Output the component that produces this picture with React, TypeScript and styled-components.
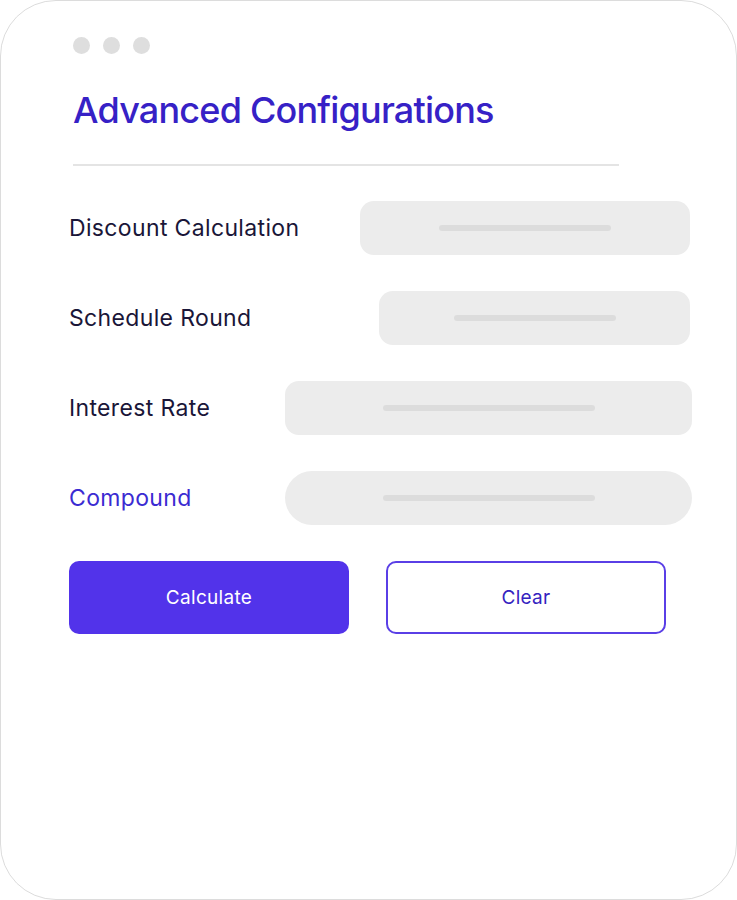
import React from "react";
import styled, { createGlobalStyle } from "styled-components";

const GlobalStyle = createGlobalStyle`
  * { box-sizing: border-box; }
  body {
    margin: 0;
    background: #ffffff;
    font-family: Inter, "Noto Sans", sans-serif;
  }
`;

type Field = {
  label: string;
  accent?: boolean;
  width: number;
  lineWidth: number;
  rounded?: boolean;
  offset: number;
};

const fields: Field[] = [
  { label: "Discount Calculation", width: 330, lineWidth: 172, offset: 46 },
  { label: "Schedule Round", width: 311, lineWidth: 162, offset: 46 },
  { label: "Interest Rate", width: 407, lineWidth: 212, offset: 44 },
  { label: "Compound", accent: true, width: 407, lineWidth: 212, rounded: true, offset: 44 },
];

export default function App() {
  return (
    <>
      <GlobalStyle />
      <Card>
        <Dots>
          <Dot />
          <Dot />
          <Dot />
        </Dots>
        <Title>Advanced Configurations</Title>
        <Divider />
        <Form>
          {fields.map((f) => (
            <Row key={f.label} $offset={f.offset}>
              <Label $accent={f.accent}>{f.label}</Label>
              <Input $width={f.width} $rounded={f.rounded}>
                <Placeholder $width={f.lineWidth} />
              </Input>
            </Row>
          ))}
        </Form>
        <Actions>
          <PrimaryButton>Calculate</PrimaryButton>
          <OutlineButton>Clear</OutlineButton>
        </Actions>
      </Card>
    </>
  );
}

const Card = styled.div`
  width: 737px;
  height: 900px;
  border: 1px solid #dcdcdc;
  border-radius: 56px;
  background: #fff;
  padding: 36px 0 0 68px;
`;

const Dots = styled.div`
  display: flex;
  gap: 13px;
  margin-left: 4px;
`;

const Dot = styled.span`
  width: 17px;
  height: 17px;
  border-radius: 50%;
  background: #dedede;
`;

const Title = styled.h1`
  margin: 33px 0 0 4px;
  font-size: 36px;
  line-height: 46px;
  font-weight: 500;
  letter-spacing: -0.8px;
  color: #3621c6;
`;

const Divider = styled.div`
  width: 546px;
  height: 2px;
  margin: 31px 0 0 4px;
  background: #e4e4e4;
`;

const Form = styled.div`
  display: flex;
  flex-direction: column;
  gap: 36px;
  margin-top: 35px;
`;

const Row = styled.div<{ $offset: number }>`
  display: flex;
  align-items: center;
  justify-content: space-between;
  height: 54px;
  padding-right: ${(p) => p.$offset}px;
`;

const Label = styled.span<{ $accent?: boolean }>`
  font-size: 23px;
  color: ${(p) => (p.$accent ? "#3b2bd2" : "#1a1638")};
  letter-spacing: 0.35px;
`;

const Input = styled.div<{ $width: number; $rounded?: boolean }>`
  width: ${(p) => p.$width}px;
  height: 54px;
  border-radius: ${(p) => (p.$rounded ? "27px" : "14px")};
  background: #ececec;
  display: flex;
  align-items: center;
  justify-content: center;
`;

const Placeholder = styled.span<{ $width: number }>`
  width: ${(p) => p.$width}px;
  height: 6px;
  border-radius: 3px;
  background: #dcdcdc;
`;

const Actions = styled.div`
  display: flex;
  gap: 37px;
  margin-top: 36px;
`;

const ButtonBase = styled.button`
  width: 280px;
  height: 73px;
  border-radius: 10px;
  font-family: Inter, "Noto Sans", sans-serif;
  font-size: 19px;
  letter-spacing: 0.3px;
  cursor: pointer;
`;

const PrimaryButton = styled(ButtonBase)`
  background: #5233ea;
  border: none;
  color: #fff;
`;

const OutlineButton = styled(ButtonBase)`
  background: #fff;
  border: 2px solid #5a3fe6;
  color: #3423c0;
`;
